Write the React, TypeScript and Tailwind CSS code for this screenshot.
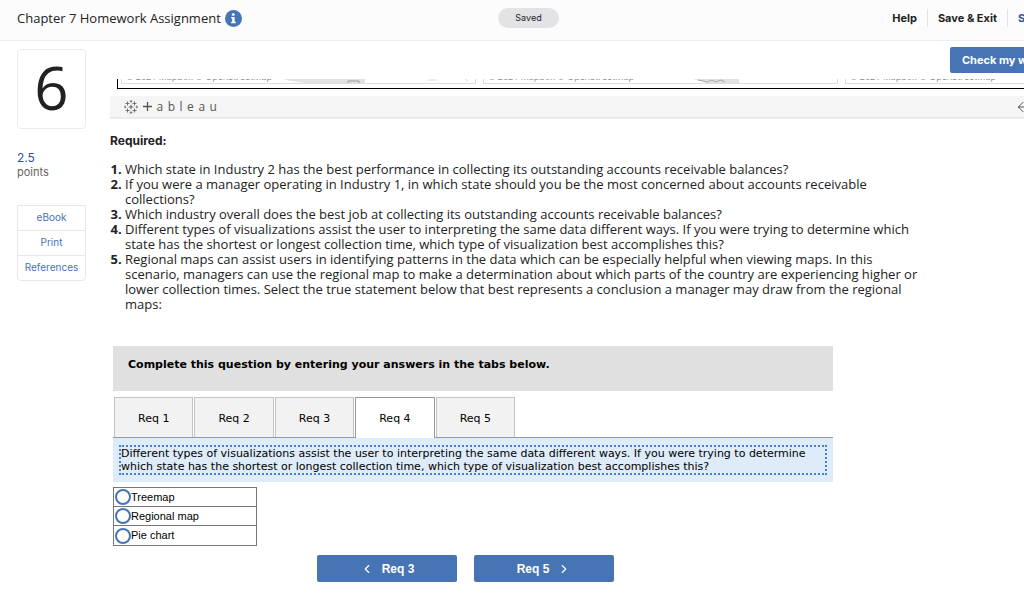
import React, { useState } from 'react';
import clsx from 'clsx';
import { ArrowLeft, ChevronLeft, ChevronRight } from 'lucide-react';

const questions = [
    "Which state in Industry 2 has the best performance in collecting its outstanding accounts receivable balances?",
    "If you were a manager operating in Industry 1, in which state should you be the most concerned about accounts receivable collections?",
    "Which industry overall does the best job at collecting its outstanding accounts receivable balances?",
    "Different types of visualizations assist the user to interpreting the same data different ways. If you were trying to determine which state has the shortest or longest collection time, which type of visualization best accomplishes this?",
    "Regional maps can assist users in identifying patterns in the data which can be especially helpful when viewing maps. In this scenario, managers can use the regional map to make a determination about which parts of the country are experiencing higher or lower collection times. Select the true statement below that best represents a conclusion a manager may draw from the regional maps:",
];

const tabs = ["Req 1", "Req 2", "Req 3", "Req 4", "Req 5"];
const options = ["Treemap", "Regional map", "Pie chart"];
const resources = ["eBook", "Print", "References"];

export default function App() {
    return (
        <div className="min-h-screen w-full overflow-hidden bg-white font-['Inter',sans-serif] text-[#222]">
            <div className="min-w-[1057px]">
                <Header />
                <div className="flex items-start pl-[17px]">
                    <Sidebar />
                    <main className="ml-6 flex-1 min-w-0">
                        <div className="flex justify-end h-[38px] pt-[6px]">
                            <button className="h-[26px] px-3 rounded-xs bg-[#4674b4] text-white text-[11px] font-bold whitespace-nowrap">
                                Check my work
                            </button>
                        </div>
                        <MapStrip />
                        <TableauBar />
                        <Requirements />
                        <AnswerPanel />
                    </main>
                </div>
            </div>
        </div>
    );
}

function Header() {
    return (
        <header className="grid grid-cols-[1fr_auto_1fr] items-start h-[41px] px-[17px] bg-[#fcfcfc] border-b border-[#eee]">
            <div className="flex items-center gap-[4px] pt-[9px]">
                <h1 className="font-['Open_Sans',sans-serif] text-[13px] leading-[18px] whitespace-nowrap">Chapter 7 Homework Assignment</h1>
                <button aria-label="Assignment information">
                    <InfoIcon />
                </button>
            </div>
            <div className="mt-2 h-5 px-[17px] rounded-full bg-[#e3e2e6] text-[9px] leading-[19px]">Saved</div>
            <nav className="flex justify-end items-center -mr-4 pt-[9px] text-[11px] leading-[18px] font-bold whitespace-nowrap">
                <a href="#help" className="pr-[10px]">Help</a>
                <a href="#save" className="px-[10px] border-l border-[#e4e4e4]">Save &amp; Exit</a>
                <a href="#submit" className="pl-[10px] border-l border-[#e4e4e4] text-[#2c5596]">Submit</a>
            </nav>
        </header>
    );
}

function InfoIcon() {
    return (
        <svg width="17" height="17" viewBox="0 0 17 17">
            <circle cx="8.5" cy="8.5" r="8.5" fill="#4674b4" />
            <circle cx="8.3" cy="4.6" r="1.4" fill="#fff" />
            <path d="M6.2 7h3.4v4.7h1.2v1.5H6.1v-1.5h1.1V8.5h-1z" fill="#fff" />
        </svg>
    );
}

function Sidebar() {
    return (
        <aside className="w-[69px] shrink-0 pt-2">
            <div className="h-20 flex items-center justify-center rounded-sm border border-[#ebebeb] font-['Open_Sans',sans-serif] text-[60px] leading-[76px] font-medium pb-1">
                6
            </div>
            <div className="mt-[21px] text-[12px] leading-[16px] text-[#2c5596]">2.5</div>
            <div className="text-[11px] leading-[12px] text-[#666]">points</div>
            <div className="mt-[27px] flex flex-col rounded-b-sm border border-[#e8e8e8] divide-y divide-[#e8e8e8]">
                {resources.map((name) => (
                    <a key={name} href="#resources" className="h-[24px] box-content text-center text-[10px] leading-[23px] text-[#4674b4]">
                        {name}
                    </a>
                ))}
            </div>
        </aside>
    );
}

/* Bottom edge of the scrolled map dashboard */
function MapStrip() {
    return (
        <div className="ml-[7px] h-[10px] overflow-hidden flex items-end gap-[7px] pl-[3px] pb-[4px] border-l border-b border-black">
            <MapPanel>
                <path d="M161 0h82v4h-60l-14-2z" fill="#e2e2e2" />
                <path d="M226 4V2h11v2" fill="none" stroke="#999" />
                <path d="M306 1h9M343 0l3 2" stroke="#ddd" />
            </MapPanel>
            <MapPanel>
                <path d="M209 0h46v4h-31z" fill="#e2e2e2" />
                <path d="M214 1l5 1 4 1 5-2 4 2 5-2 4 2" fill="none" stroke="#aaa" />
            </MapPanel>
            <MapPanel />
        </div>
    );
}

function MapPanel({ children }: { children?: React.ReactNode }) {
    return (
        <div className="relative w-[355px] h-[20px] shrink-0 border border-t-0 border-[#ddd] pl-1">
            <svg width="354" height="4" className="absolute left-0 bottom-0">{children}</svg>
            <span className="block pt-[5px] font-['Open_Sans',sans-serif] text-[9px] leading-[16px] text-[#888] whitespace-pre">© 2021 Mapbox © OpenStreetMap</span>
        </div>
    );
}

function TableauBar() {
    return (
        <div className="mt-[7px] h-[23px] flex items-center justify-between pl-[14px] pr-[26px] bg-[#f5f5f5] border-b-2 border-[#ebebeb] text-[#555]">
            <div className="flex items-center gap-[5px]">
                <TableauMark />
                <div className="w-[74px] flex items-center justify-between font-['Open_Sans',sans-serif] text-[12px] leading-[14px] font-medium">
                    <svg width="9" height="11" viewBox="0 0 9 11" stroke="#555" strokeWidth="1.3">
                        <path d="M4.5 1v9M0 5.5h9" />
                    </svg>
                    {"ableau".split("").map((letter, i) => (
                        <span key={i}>{letter}</span>
                    ))}
                </div>
            </div>
            <ArrowLeft size={16} strokeWidth={1.5} />
        </div>
    );
}

function TableauMark() {
    return (
        <svg width="14" height="14" viewBox="0 0 14 14" stroke="#666" fill="none">
            <path d="M7 4.7v4.6M4.7 7h4.6" strokeWidth="1.1" />
            <path d="M3.5 1.5v4M1.5 3.5h4M10.5 1.5v4M8.5 3.5h4M3.5 8.5v4M1.5 10.5h4M10.5 8.5v4M8.5 10.5h4" strokeWidth=".9" />
            <path d="M7 0v2.8M5.6 1.4h2.8M7 11.2V14M5.6 12.6h2.8M1.2 5.6v2.8M0 7h2.4M12.8 5.6v2.8M11.6 7H14" strokeWidth=".8" />
        </svg>
    );
}

function Requirements() {
    return (
        <section className="mt-[14px] max-w-[812px] font-['Open_Sans',sans-serif] text-[13px] leading-[15px]">
            <h2 className="font-['Inter',sans-serif] text-[12px] font-bold">Required:</h2>
            <ol className="mt-[14px] pl-[15px] list-decimal marker:font-bold">
                {questions.map((text, i) => (
                    <li key={i}>{text}</li>
                ))}
            </ol>
        </section>
    );
}

function AnswerPanel() {
    const [activeTab, setActiveTab] = useState(3);
    const [answer, setAnswer] = useState("");

    return (
        <section className="mt-[34px] ml-[3px] max-w-[720px] font-['DejaVu_Sans',sans-serif] text-black text-[11px]">
            <div className="h-[45px] pt-[11px] px-[15px] bg-[#e0e0e0] leading-[16px] font-bold">
                Complete this question by entering your answers in the tabs below.
            </div>
            <div className="mt-[6px] border-b border-[#999]">
                <div role="tablist" className="w-[402px] pl-px flex gap-px">
                    {tabs.map((tab, i) => (
                        <button
                            key={tab}
                            role="tab"
                            aria-selected={i === activeTab}
                            onClick={() => setActiveTab(i)}
                            className={clsx(
                                "flex-1 h-[40px] pt-[3px] border border-b-0",
                                i === activeTab ? "bg-white border-[#999] h-[41px] -mb-px" : "bg-[#f2f2f2] border-[#c4c4c4]"
                            )}
                        >
                            {tab}
                        </button>
                    ))}
                </div>
            </div>
            <div className="bg-[#deebf8] px-[6px] py-[7px]">
                <p className="border-2 border-dotted border-[#4a7fc9] leading-[13px]">
                    {questions[3]}
                </p>
            </div>

            <fieldset className="mt-[5px] w-[144px] border border-[#777] divide-y divide-[#777] font-['Liberation_Sans',sans-serif]">
                {options.map((option) => (
                    <label key={option} className="flex items-center h-[19px] pl-px">
                        <input
                            type="radio"
                            name="answer"
                            value={option}
                            checked={answer === option}
                            onChange={() => setAnswer(option)}
                            className="appearance-none w-4 h-4 rounded-full border-2 border-[#4674b4] bg-white checked:bg-[#4674b4]"
                        />
                        {option}
                    </label>
                ))}
            </fieldset>

            <div className="mt-[9px] flex justify-center gap-[17px] pr-[15px] font-['Liberation_Sans',sans-serif] text-[12px] font-bold text-white">
                <button className="w-[140px] h-[27px] flex items-center justify-center gap-2 rounded-xs bg-[#4674b4]">
                    <ChevronLeft size={14} />
                    Req 3
                </button>
                <button className="w-[140px] h-[27px] flex items-center justify-center gap-2 rounded-xs bg-[#4674b4]">
                    Req 5
                    <ChevronRight size={14} />
                </button>
            </div>
        </section>
    );
}
